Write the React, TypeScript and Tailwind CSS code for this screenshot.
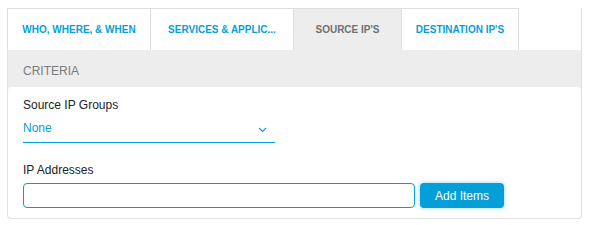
const tabs = [
  { label: "WHO, WHERE, & WHEN", w: "w-[143px]", active: false },
  { label: "SERVICES & APPLIC...", w: "w-[143px]", active: false },
  { label: "SOURCE IP'S", w: "w-[108px]", active: true },
  { label: "DESTINATION IP'S", w: "w-[117px]", active: false },
];

function Chevron() {
  return (
    <svg width="9" height="6" viewBox="0 0 9 6" fill="none" className="mt-[7px]">
      <path d="M1 1l3.5 3.5L8 1" stroke="#049fd9" strokeWidth="1.1" />
    </svg>
  );
}

export default function App() {
  return (
    <div className="h-[225px] bg-white pl-[7px] pt-[8px] font-['Liberation_Sans',Arial,sans-serif]">
      <div className="w-[575px]">
        <div className="flex h-[42px] border-x border-[#dedede]">
          {tabs.map((t) => (
            <div
              key={t.label}
              className={`${t.w} flex items-center justify-center border-t border-r border-[#dedede] text-[10px] font-bold ${
                t.active ? "bg-[#ededed] text-[#707070]" : "bg-white text-[#049fd9]"
              }`}
            >
              {t.label}
            </div>
          ))}
        </div>

        <div className="rounded-b-[4px] border-x border-b border-[#e2e2e2] bg-[#ededed]">
          <div className="h-[37px] px-[15px] pt-[14px] text-[12px] leading-[14px] text-[#7a7a7a]">
            CRITERIA
          </div>
          <div className="rounded-[4px] bg-white px-[15px] pt-[11px] pb-[10px]">
            <div className="text-[12px] leading-[14px] text-[#222]">Source IP Groups</div>
            <div className="mt-[8px] flex h-[23px] w-[252px] items-start justify-between border-b border-[#049fd9] pr-[8px]">
              <span className="pt-px text-[12px] leading-[14px] text-[#049fd9]">None</span>
              <Chevron />
            </div>

            <div className="mt-[20px] text-[12px] leading-[14px] text-[#222]">IP Addresses</div>
            <div className="mt-[6px] flex items-center gap-[5px]">
              <input
                className="h-[25px] w-[392px] rounded-[4px] border border-[#049fd9] bg-white px-2 text-[12px] outline-none"
                type="text"
              />
              <button className="h-[25px] w-[84px] rounded-[4px] bg-[#049fd9] text-[12px] text-white shadow-[0_0_4px_rgba(4,159,217,0.45)]">
                Add Items
              </button>
            </div>
          </div>
        </div>
      </div>
    </div>
  );
}
